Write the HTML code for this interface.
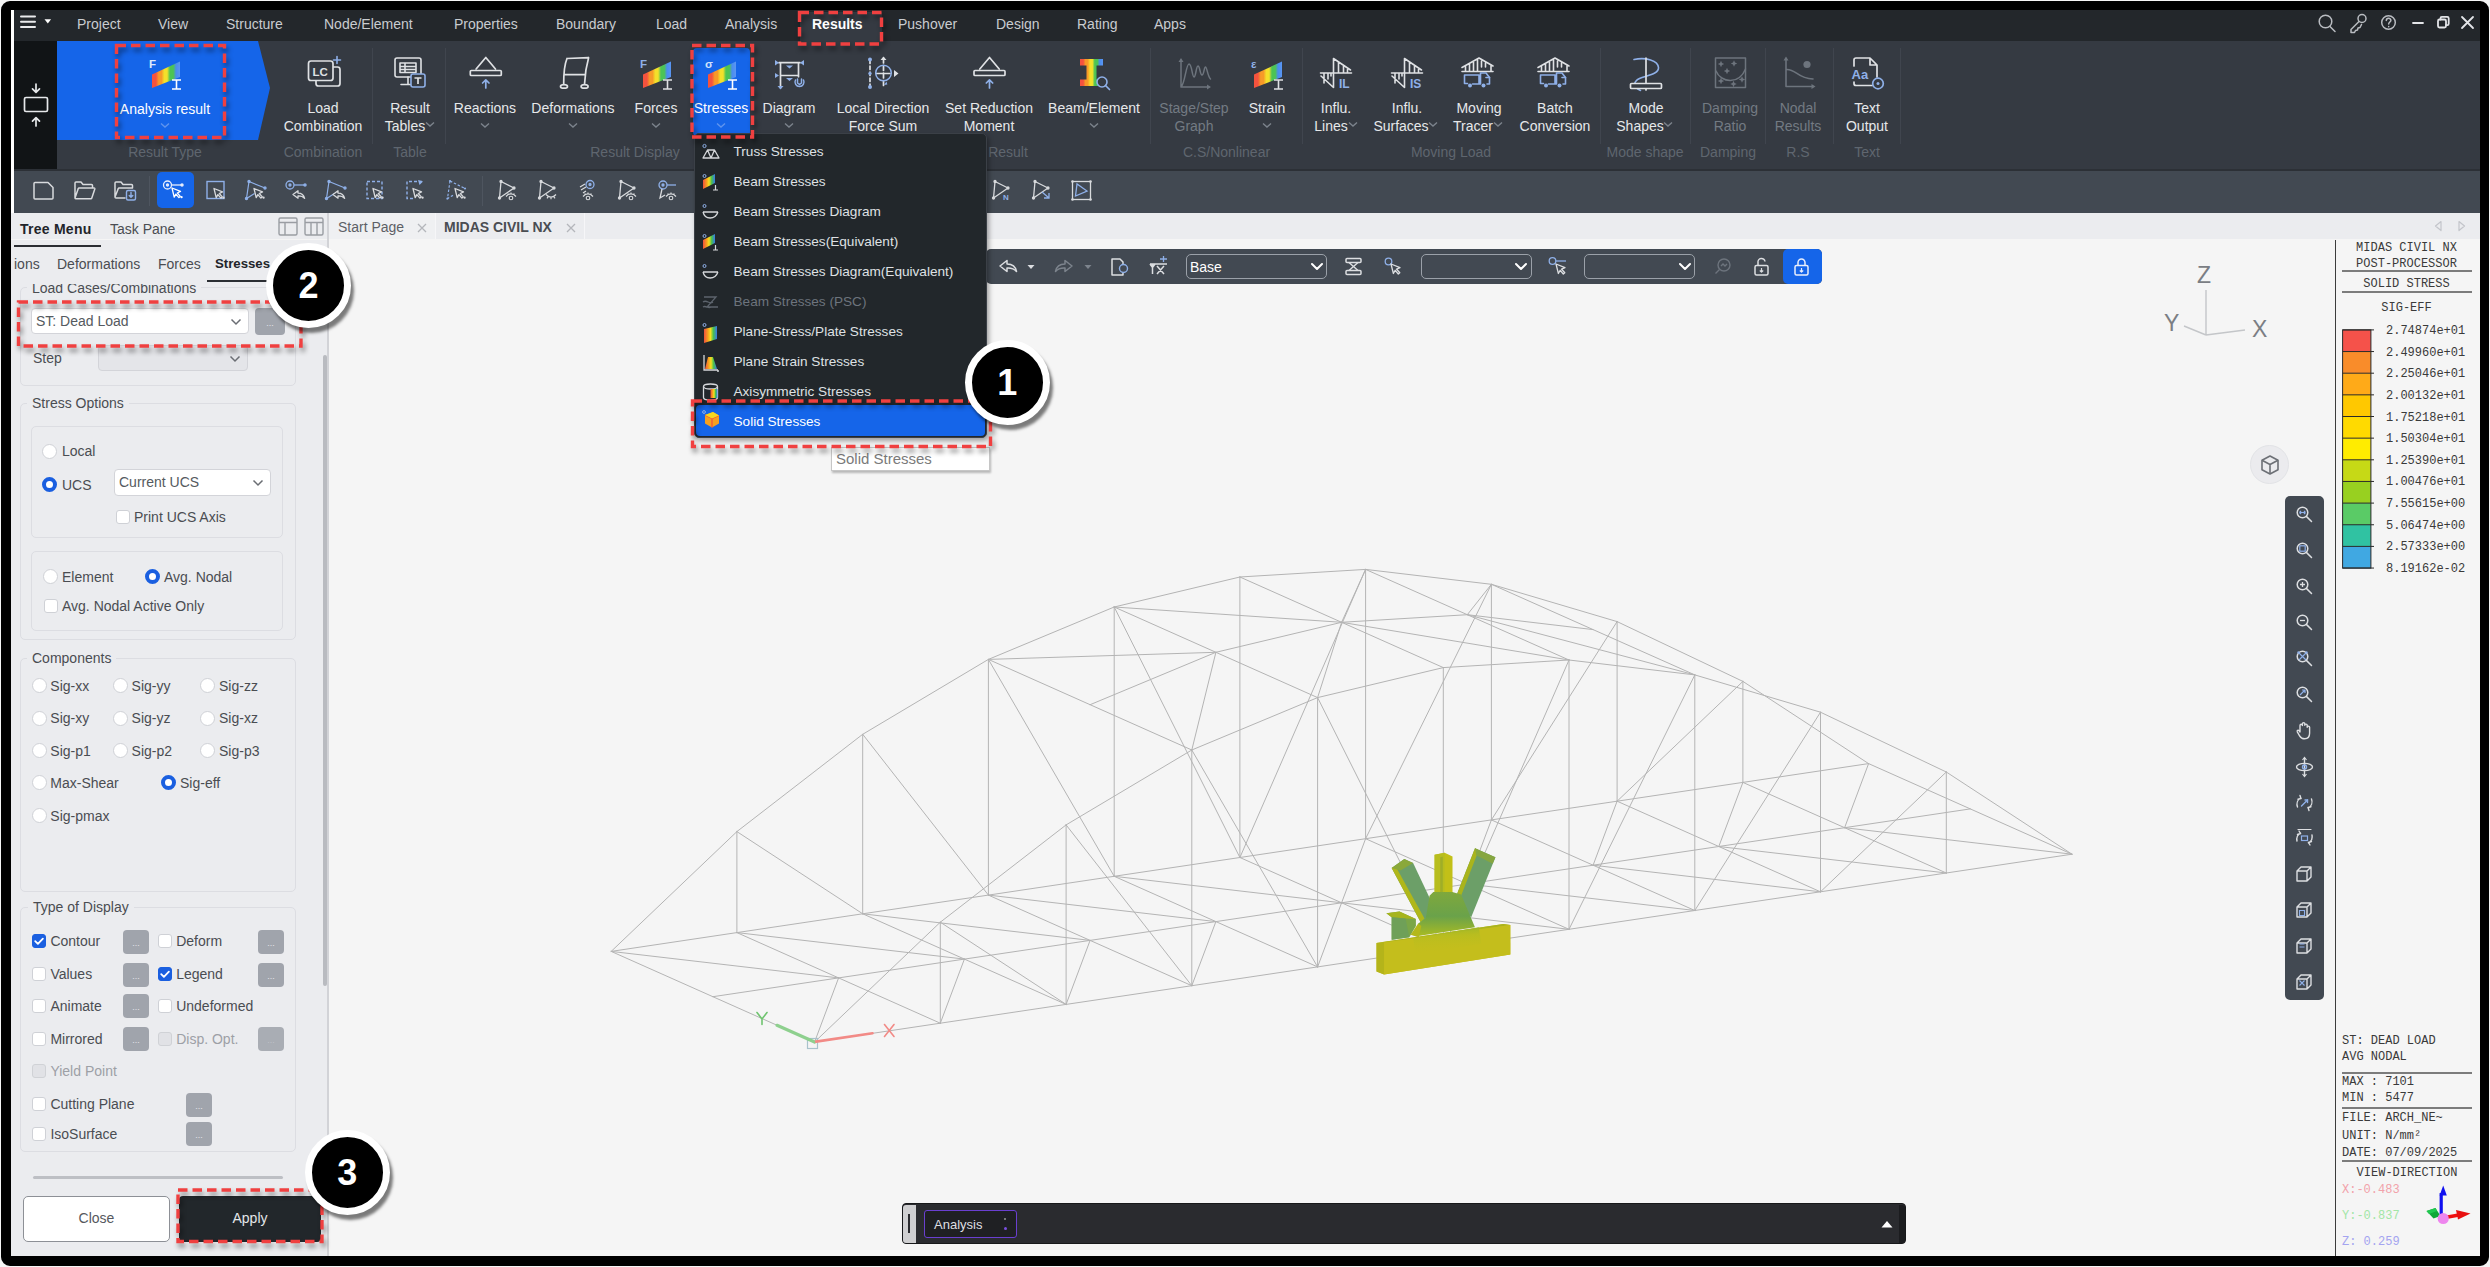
<!DOCTYPE html>
<html><head><meta charset="utf-8"><title>MIDAS CIVIL NX - Solid Stresses</title>
<style>
*{box-sizing:border-box}
html,body{margin:0;padding:0}
body{width:2490px;height:1267px;position:relative;overflow:hidden;background:#fff;font-family:"Liberation Sans",sans-serif;font-size:14px;color:#333}
.abs{position:absolute}
#app{position:absolute;left:0;top:0;width:2490px;height:1267px;overflow:hidden;background:#f5f5f5}
#frame{position:absolute;left:1px;top:1px;width:2488px;height:1265px;border-style:solid;border-color:#000;border-width:9px 9px 10px 10px;border-radius:9px;z-index:100;pointer-events:none}
#frameo{position:absolute;left:0;top:0;width:2490px;height:1267px;border:1px solid #fff;z-index:101;pointer-events:none}
.t{position:absolute;white-space:nowrap;line-height:1}
.mb{position:absolute;top:16px;font-size:14px;color:#c9ccd0;white-space:nowrap;line-height:16px}
.rl{position:absolute;font-size:14px;color:#e6e8ea;white-space:nowrap;line-height:18px;text-align:center;transform:translateX(-50%)}
.rl.dis{color:#737a83}
.gl{position:absolute;top:144px;font-size:14px;color:#5f666f;white-space:nowrap;line-height:16px;text-align:center;transform:translateX(-50%)}
.sep{position:absolute;top:48px;width:1px;height:96px;background:#40454e}
.chev{position:absolute;width:9px;height:5px}
.pl{position:absolute;font-size:14px;color:#4a4d52;white-space:nowrap;line-height:16px}
.radio{position:absolute;width:15px;height:15px;border-radius:50%;background:#fff;border:1px solid #cfd1d6}
.radio.on{border:4.5px solid #1a5fe0;background:#fff}
.cb{position:absolute;width:14px;height:14px;border-radius:3px;background:#fff;border:1px solid #cfd1d6}
.cb.on{background:#1a5fe0;border-color:#1a5fe0}
.cb.dis{background:#e1e2e6;border-color:#d0d2d6}
.dots{position:absolute;width:26px;height:24px;border-radius:4px;background:#a0a4ac;color:#e4e6ea;font-size:9px;text-align:center;line-height:26px;letter-spacing:0}
.grp{position:absolute;border:1px solid #dcdde2;border-radius:5px}
.grpl{position:absolute;background:#ebecef;padding:0 5px;font-size:14px;color:#4a4d52;line-height:16px;white-space:nowrap}
.mi{position:absolute;left:733.5px;font-size:13.6px;color:#dfe1e4;white-space:nowrap;line-height:16px}
.mono{font-family:"Liberation Mono",monospace;font-size:12px;color:#3a3a3a;white-space:nowrap;position:absolute;line-height:12px}
.hl{position:absolute;border:0;pointer-events:none}
.callout{position:absolute;width:85px;height:85px;border-radius:50%;background:#000;border:7px solid #fff;box-shadow:3px 5px 3px rgba(0,0,0,.5);color:#fff;font-weight:bold;font-size:36px;text-align:center;line-height:71px;z-index:50}
</style></head>
<body>
<div id="app">
<!-- ===== menu bar ===== -->
<div class="abs" style="left:11px;top:10px;width:2469px;height:31px;background:#23272b"></div>
<div class="abs" style="left:11px;top:10px;width:3px;height:203px;background:#fff"></div>
<svg class="abs" style="left:18px;top:13px" width="40" height="18" viewBox="0 0 40 18"><g stroke="#e9eaec" stroke-width="2" stroke-linecap="round"><path d="M3 3.5H17M3 8.7H17M3 14H17"/></g><path d="M26.5 6.2h6.6l-3.3 4.4z" fill="#fff"/></svg>
<span class="mb" style="left:77px">Project</span>
<span class="mb" style="left:158px">View</span>
<span class="mb" style="left:226px">Structure</span>
<span class="mb" style="left:324px">Node/Element</span>
<span class="mb" style="left:454px">Properties</span>
<span class="mb" style="left:556px">Boundary</span>
<span class="mb" style="left:656px">Load</span>
<span class="mb" style="left:725px">Analysis</span>
<div class="abs" style="left:800px;top:12px;width:82px;height:31px;background:#353a42"></div>
<span class="mb" style="left:812px;color:#fff;font-weight:bold">Results</span>
<span class="mb" style="left:898px">Pushover</span>
<span class="mb" style="left:996px">Design</span>
<span class="mb" style="left:1077px">Rating</span>
<span class="mb" style="left:1154px">Apps</span>
<!-- window buttons -->
<svg class="abs" style="left:2310px;top:10px" width="170" height="30" viewBox="0 0 170 30"><g fill="none" stroke="#b9bcc1" stroke-width="1.5" stroke-linecap="round" stroke-linejoin="round">
<circle cx="15.5" cy="11.5" r="6.3"/><path d="M20 16.5l5 5"/>
<circle cx="52" cy="8.5" r="4"/><path d="M49 11.5l-8 8v3h3.5l1-2 2-.5.5-2 2-.5 1.5-3"/>
<circle cx="78.5" cy="12.5" r="6.8"/><path d="M76.3 10.6c0-3 4.6-3 4.6-.3 0 1.7-2.2 1.8-2.2 3.8M78.7 16.6v.2"/>
</g><g fill="none" stroke="#e3e5e8" stroke-width="1.8" stroke-linecap="round" stroke-linejoin="round"><path d="M103 13H113"/><rect x="128" y="9.5" width="8" height="8" rx="1.5"/><path d="M130.5 9.5v-1.2c0-.8.6-1.4 1.4-1.4h5.4c.8 0 1.4.6 1.4 1.4v5.4c0 .8-.6 1.4-1.4 1.4H136"/><path d="M152 7l11 11M163 7l-11 11"/></g></svg>
<!-- ===== ribbon ===== -->
<div class="abs" style="left:14px;top:41px;width:2466px;height:128px;background:#353a42"></div>
<div class="abs" style="left:14px;top:41px;width:43px;height:128px;background:#111416"></div>
<svg class="abs" style="left:20px;top:80px" width="32" height="50" viewBox="0 0 32 50"><g fill="none" stroke="#e6e8ea" stroke-width="1.7" stroke-linecap="round" stroke-linejoin="round"><rect x="4.5" y="17.5" width="23" height="14" rx="1.5"/><path d="M16 4v8M12.5 8.8L16 12.3l3.5-3.5M16 46v-8M12.5 41.2L16 37.7l3.5 3.5"/></g></svg>
<svg class="abs" style="left:57px;top:41px" width="215" height="99" viewBox="0 0 215 99"><path d="M0 0H201L213 47L201 99H0z" fill="#1565e9"/></svg>
<!-- group separators -->
<div class="sep" style="left:372px"></div><div class="sep" style="left:445px"></div><div class="sep" style="left:1150px"></div><div class="sep" style="left:1302px"></div><div class="sep" style="left:1600px"></div><div class="sep" style="left:1690px"></div><div class="sep" style="left:1765px"></div><div class="sep" style="left:1833px"></div><div class="sep" style="left:1900px"></div>
<!-- stresses active bg -->
<div class="abs" style="left:693px;top:48px;width:57px;height:88px;background:#1565e9;border-radius:4px"></div>
<!-- labels -->
<span class="rl" style="left:165px;top:99.5px;color:#fff">Analysis result</span>
<span class="rl" style="left:323px;top:99px">Load<br>Combination</span>
<span class="rl" style="left:410px;top:99px">Result</span><span class="rl" style="left:405px;top:117px">Tables</span>
<span class="rl" style="left:485px;top:99px">Reactions</span>
<span class="rl" style="left:573px;top:99px">Deformations</span>
<span class="rl" style="left:656px;top:99px">Forces</span>
<span class="rl" style="left:721px;top:99px;color:#fff">Stresses</span>
<span class="rl" style="left:789px;top:99px">Diagram</span>
<span class="rl" style="left:883px;top:99px">Local Direction<br>Force Sum</span>
<span class="rl" style="left:989px;top:99px">Set Reduction<br>Moment</span>
<span class="rl" style="left:1094px;top:99px">Beam/Element</span>
<span class="rl dis" style="left:1194px;top:99px">Stage/Step<br>Graph</span>
<span class="rl" style="left:1267px;top:99px">Strain</span>
<span class="rl" style="left:1336px;top:99px">Influ.</span><span class="rl" style="left:1331px;top:117px">Lines</span>
<span class="rl" style="left:1407px;top:99px">Influ.</span><span class="rl" style="left:1401px;top:117px">Surfaces</span>
<span class="rl" style="left:1479px;top:99px">Moving</span><span class="rl" style="left:1473px;top:117px">Tracer</span>
<span class="rl" style="left:1555px;top:99px">Batch<br>Conversion</span>
<span class="rl" style="left:1646px;top:99px">Mode</span><span class="rl" style="left:1640px;top:117px">Shapes</span>
<span class="rl dis" style="left:1730px;top:99px">Damping<br>Ratio</span>
<span class="rl dis" style="left:1798px;top:99px">Nodal<br>Results</span>
<span class="rl" style="left:1867px;top:99px">Text<br>Output</span>
<!-- group labels -->
<span class="gl" style="left:165px">Result Type</span>
<span class="gl" style="left:323px">Combination</span>
<span class="gl" style="left:410px">Table</span>
<span class="gl" style="left:635px">Result Display</span>
<span class="gl" style="left:1008px">Result</span>
<span class="gl" style="left:1226.5px">C.S/Nonlinear</span>
<span class="gl" style="left:1451px">Moving Load</span>
<span class="gl" style="left:1645px">Mode shape</span>
<span class="gl" style="left:1728px">Damping</span>
<span class="gl" style="left:1798px">R.S</span>
<span class="gl" style="left:1867px">Text</span>
<!-- ===== ribbon icons ===== -->
<svg class="abs" style="left:0;top:0" width="2490" height="170" viewBox="0 0 2490 170">
<defs><linearGradient id="rbw" x1="0" y1="0" x2="1" y2="0"><stop offset="0" stop-color="#f4523e"/><stop offset=".2" stop-color="#f4523e"/><stop offset=".2" stop-color="#f79a28"/><stop offset=".4" stop-color="#f79a28"/><stop offset=".4" stop-color="#f4e02a"/><stop offset=".6" stop-color="#f4e02a"/><stop offset=".6" stop-color="#4cc455"/><stop offset=".8" stop-color="#4cc455"/><stop offset=".8" stop-color="#4a8cf0"/><stop offset="1" stop-color="#4a8cf0"/></linearGradient>
<linearGradient id="rbs" x1="0" y1="0" x2="1" y2="0"><stop offset="0" stop-color="#f4523e"/><stop offset=".14" stop-color="#f4523e"/><stop offset=".24" stop-color="#f79a28"/><stop offset=".34" stop-color="#f79a28"/><stop offset=".44" stop-color="#f4e02a"/><stop offset=".54" stop-color="#f4e02a"/><stop offset=".64" stop-color="#4cc455"/><stop offset=".76" stop-color="#4cc455"/><stop offset=".86" stop-color="#4a8cf0"/><stop offset="1" stop-color="#5a96f2"/></linearGradient></defs>
<path d="M152.0 74.500L180.0 61.500V77L152.0 88z" fill="url(#rbs)"/>
<text x="149.0" y="68" font-family="Liberation Sans,sans-serif" font-size="11.500" font-weight="bold" fill="#dfe9fb">F</text>
<path d="M172.0 80h9M172.0 89h9M176.5 80v9" stroke="#fff" stroke-width="1.600" fill="none"/>
<path d="M643.0 74.500L671.0 61.500V77L643.0 88z" fill="url(#rbs)"/>
<text x="640.0" y="68" font-family="Liberation Sans,sans-serif" font-size="11.500" font-weight="bold" fill="#8fb0e8">F</text>
<path d="M663.0 80h9M663.0 89h9M667.5 80v9" stroke="#dfe1e4" stroke-width="1.600" fill="none"/>
<path d="M708.0 74.500L736.0 61.500V77L708.0 88z" fill="url(#rbs)"/>
<text x="705.0" y="68" font-family="Liberation Sans,sans-serif" font-size="11.500" font-weight="bold" fill="#cfe0fb">&#963;</text>
<path d="M728.0 80h9M728.0 89h9M732.5 80v9" stroke="#fff" stroke-width="1.600" fill="none"/>
<path d="M1254.0 74.500L1282.0 61.500V77L1254.0 88z" fill="url(#rbs)"/>
<text x="1251.0" y="68" font-family="Liberation Sans,sans-serif" font-size="11.500" font-weight="bold" fill="#8fb0e8">&#949;</text>
<path d="M1274.0 80h9M1274.0 89h9M1278.5 80v9" stroke="#dfe1e4" stroke-width="1.600" fill="none"/>
<g fill="none" stroke="#dfe1e4" stroke-width="1.7" stroke-linecap="round" stroke-linejoin="round" ><rect x="316" y="67" width="24" height="19" rx="2.500"/></g>
<rect x="308.500" y="61" width="24.500" height="19.500" rx="2.500" fill="#353a42" stroke="#dfe1e4" stroke-width="1.700"/>
<text x="312.500" y="75.500" font-family="Liberation Sans,sans-serif" font-size="11.500" font-weight="bold" fill="#dfe1e4">LC</text>
<g fill="none" stroke="#8fb0e8" stroke-width="1.6" stroke-linecap="round" stroke-linejoin="round" ><path d="M337 56.500v7M333.500 60h7"/></g>
<g fill="none" stroke="#dfe1e4" stroke-width="1.6" stroke-linecap="round" stroke-linejoin="round" ><rect x="395" y="58" width="26" height="19" rx="2"/><path d="M408 77v7M401 84.500h12"/><path d="M400 63h16v9.500h-16zM400 66.500h16M400 69.500h16M405 63v9.500"/></g>
<rect x="411" y="74" width="14" height="13" rx="2" fill="#353a42" stroke="#8fb0e8" stroke-width="1.600"/>
<path d="M414.500 78h7M418 78v6" stroke="#dfe1e4" stroke-width="1.700" fill="none"/>
<g fill="none" stroke="#dfe1e4" stroke-width="1.7" stroke-linecap="round" stroke-linejoin="round" ><path d="M476.1 69L485.8 57.500L495.5 69"/><rect x="470.3" y="70.500" width="31" height="5" rx="1"/></g>
<g fill="none" stroke="#8fb0e8" stroke-width="1.7" stroke-linecap="round" stroke-linejoin="round" ><path d="M485.8 88v-8M482.6 83l3.200-3.200 3.200 3.200"/></g>
<g fill="none" stroke="#dfe1e4" stroke-width="1.7" stroke-linecap="round" stroke-linejoin="round" ><path d="M979.8 69L989.5 57.500L999.2 69"/><rect x="974.0" y="70.500" width="31" height="5" rx="1"/></g>
<g fill="none" stroke="#8fb0e8" stroke-width="1.7" stroke-linecap="round" stroke-linejoin="round" ><path d="M989.5 88v-8M986.3 83l3.200-3.200 3.200 3.200"/></g>
<g fill="none" stroke="#dfe1e4" stroke-width="1.7" stroke-linecap="round" stroke-linejoin="round" ><path d="M567 58.500l21.600-.8M567 58.500c-2.500 6-3.300 14-3.300 25M588.600 57.700c-2 7-3.600 15-4 25.800M564.500 74.700h21"/><ellipse cx="564" cy="86.400" rx="3.500" ry="1.800"/><ellipse cx="584.600" cy="86.400" rx="3.500" ry="1.800"/></g>
<g fill="none" stroke="#dfe1e4" stroke-width="1.7" stroke-linecap="round" stroke-linejoin="round" ><path d="M779 62.700h21M780.500 62.700v25M798.500 62.700v14M780.500 75.500h18"/></g>
<path d="M775 60l4 2.700-4 2.700zM804 60l-4 2.700 4 2.700zM786 65.500l3.500 3 3.500-3zM775 73l4 2.500-4 2.500zM786 78l3.500 3 3.500-3zM777.500 86l3 3.500 3-3.500z" fill="#8fb0e8"/>
<g fill="none" stroke="#8fb0e8" stroke-width="1.5" stroke-linecap="round" stroke-linejoin="round" ><path d="M795.500 80a4.500 4.500 0 1 0 8 0M797.500 79v4l2 1.500 2-1.500v-4"/></g>
<g fill="none" stroke="#dfe1e4" stroke-width="1.7" stroke-linecap="round" stroke-linejoin="round" ><path d="M870 60v27" stroke-dasharray="3.500 2.500"/><path d="M883.500 58v30" stroke-dasharray="5 2.500"/><path d="M876 73.500h14"/></g>
<g fill="none" stroke="#8fb0e8" stroke-width="1.5" stroke-linecap="round" stroke-linejoin="round" ><circle cx="883.500" cy="73" r="7.800"/></g>
<circle cx="870" cy="59.500" r="2" fill="#8fb0e8"/><circle cx="870" cy="73.500" r="1.700" fill="#8fb0e8"/><circle cx="870" cy="87" r="2" fill="#8fb0e8"/>
<path d="M880.500 60l3-3.500 3 3.500zM894 70l4.500 3.500-4.500 3.500z" fill="#dfe1e4"/><path d="M884 85l2.500-3.500.8 3z" fill="#8fb0e8"/>
<path d="M1080 59h23v6.500h-6.500v14h6.500v6.500h-23v-6.500h6.500v-14h-6.500z" fill="url(#rbs)"/>
<circle cx="1102" cy="82" r="5" fill="#353a42" stroke="#8fb0e8" stroke-width="1.600"/><path d="M1105.500 85.500l4 4" stroke="#8fb0e8" stroke-width="1.700" stroke-linecap="round"/>
<g fill="none" stroke="#6d747d" stroke-width="1.5" stroke-linecap="round" stroke-linejoin="round" ><path d="M1181 60v27h28M1181 87c4-3 5-23 8-23s3 13 5 13 2-11 4-11 2 9 4 9 2-8 3.500-8 2 9 5 12"/></g>
<path d="M1178.500 62l2.500-4 2.500 4zM1207 84.500l4 2.500-4 2.500z" fill="#6d747d"/>
<g fill="none" stroke="#dfe1e4" stroke-width="1.6" stroke-linecap="round" stroke-linejoin="round" ><path d="M1333.5 58.500v29M1320.5 73h31M1333.5 58.500l17 11.500M1333.5 87.500l-12.500-11.500M1338.5 62v11M1343.5 66v7M1347.5 69.500v3.500M1328.0 73v6M1324.0 73v10M1331.0 73v3"/></g>
<text x="1339.0" y="88" font-family="Liberation Sans,sans-serif" font-size="12" font-weight="bold" fill="#8fb0e8">IL</text>
<g fill="none" stroke="#dfe1e4" stroke-width="1.6" stroke-linecap="round" stroke-linejoin="round" ><path d="M1404.5 58.500v29M1391.5 73h31M1404.5 58.500l17 11.500M1404.5 87.500l-12.500-11.500M1409.5 62v11M1414.5 66v7M1418.5 69.500v3.500M1399.0 73v6M1395.0 73v10M1402.0 73v3"/></g>
<text x="1410.0" y="88" font-family="Liberation Sans,sans-serif" font-size="12" font-weight="bold" fill="#8fb0e8">IS</text>
<g fill="none" stroke="#dfe1e4" stroke-width="1.6" stroke-linecap="round" stroke-linejoin="round" ><path d="M1462.0 67.500l17-9.500 14 8M1462.0 71.500h31M1465.5 66v5.500M1469.5 63.500v8M1473.5 61v10.500M1477.5 59v12.500M1481.5 61v6M1485.5 63v4M1491.0 66v5"/></g>
<g fill="none" stroke="#8fb0e8" stroke-width="1.6" stroke-linecap="round" stroke-linejoin="round" ><path d="M1464.5 75h14.500v9M1464.5 75v8.500h3M1472.5 84h7M1487.0 84h2.500v-6.500l-3.500-4.500h-5.500v11"/><path d="M1486.0 77.500h3.500"/></g>
<circle cx="1470.0" cy="85.500" r="2" fill="#8fb0e8"/><circle cx="1483.5" cy="85.500" r="2" fill="#8fb0e8"/>
<g fill="none" stroke="#dfe1e4" stroke-width="1.6" stroke-linecap="round" stroke-linejoin="round" ><path d="M1538.0 67.500l17-9.500 14 8M1538.0 71.500h31M1541.5 66v5.500M1545.5 63.500v8M1549.5 61v10.500M1553.5 59v12.500M1557.5 61v6M1561.5 63v4M1567.0 66v5"/></g>
<g fill="none" stroke="#8fb0e8" stroke-width="1.6" stroke-linecap="round" stroke-linejoin="round" ><path d="M1540.5 75h14.500v9M1540.5 75v8.500h3M1548.5 84h7M1563.0 84h2.500v-6.500l-3.500-4.500h-5.500v11"/><path d="M1562.0 77.500h3.500"/></g>
<circle cx="1546.0" cy="85.500" r="2" fill="#8fb0e8"/><circle cx="1559.5" cy="85.500" r="2" fill="#8fb0e8"/>
<g fill="none" stroke="#8fb0e8" stroke-width="1.6" stroke-linecap="round" stroke-linejoin="round" ><path d="M1634 59.500c12-2.500 24 1 24.500 8s-13 8-19 11-7 8 1 12"/></g>
<g fill="none" stroke="#dfe1e4" stroke-width="1.7" stroke-linecap="round" stroke-linejoin="round" ><path d="M1646 58v32"/><rect x="1630.500" y="83.500" width="31" height="5" rx="1" fill="#353a42"/></g>
<g fill="none" stroke="#6d747d" stroke-width="1.5" stroke-linecap="round" stroke-linejoin="round" ><rect x="1715.500" y="58" width="30" height="29.500"/><path d="M1716 71c5 12 23 14 29.500-2"/></g>
<path d="M1721.0 60.8l1 2.200 2.200 1-2.200 1-1 2.200-1-2.200-2.200-1 2.200-1z" fill="#6d747d"/>
<path d="M1734.0 60.3l1 2.200 2.200 1-2.200 1-1 2.200-1-2.200-2.200-1 2.200-1z" fill="#6d747d"/>
<path d="M1727.0 67.8l1 2.200 2.200 1-2.200 1-1 2.200-1-2.200-2.200-1 2.200-1z" fill="#6d747d"/>
<path d="M1721.0 77.8l1 2.200 2.200 1-2.200 1-1 2.200-1-2.200-2.200-1 2.200-1z" fill="#6d747d"/>
<path d="M1733.5 80.8l1 2.200 2.200 1-2.200 1-1 2.200-1-2.200-2.200-1 2.200-1z" fill="#6d747d"/>
<path d="M1742.0 76.3l1 2.200 2.200 1-2.200 1-1 2.200-1-2.200-2.200-1 2.200-1z" fill="#6d747d"/>
<g fill="none" stroke="#6d747d" stroke-width="1.6" stroke-linecap="round" stroke-linejoin="round" ><path d="M1786 58.500v28h27M1786 69.500c10-1 11 9 27 9.500"/></g>
<path d="M1783.500 60.500l2.500-4 2.500 4zM1811.500 84l4 2.500-4 2.500z" fill="#6d747d"/><circle cx="1807" cy="64.500" r="3.600" fill="#6d747d"/>
<g fill="none" stroke="#dfe1e4" stroke-width="1.7" stroke-linecap="round" stroke-linejoin="round" ><path d="M1872 85.500h-16a2 2 0 0 1-2-2V82M1854 66v-6a2 2 0 0 1 2-2h14l7 7v12M1870 58v7h7"/></g>
<text x="1851.500" y="78.500" font-family="Liberation Sans,sans-serif" font-size="13" font-weight="bold" fill="#8fb0e8">Aa</text>
<circle cx="1878" cy="83.500" r="5.300" fill="#353a42" stroke="#8fb0e8" stroke-width="1.700"/><circle cx="1878" cy="83.500" r="1.500" fill="#8fb0e8"/>
<path d="M161.0 123.5l4 3.500 4-3.500" fill="none" stroke="#5f94ee" stroke-width="1.400"/>
<path d="M426.0 122.5l4 3.500 4-3.500" fill="none" stroke="#7c838c" stroke-width="1.400"/>
<path d="M481.0 123.5l4 3.500 4-3.500" fill="none" stroke="#7c838c" stroke-width="1.400"/>
<path d="M569.0 123.5l4 3.500 4-3.500" fill="none" stroke="#7c838c" stroke-width="1.400"/>
<path d="M652.0 123.5l4 3.500 4-3.500" fill="none" stroke="#7c838c" stroke-width="1.400"/>
<path d="M785.0 123.5l4 3.500 4-3.500" fill="none" stroke="#7c838c" stroke-width="1.400"/>
<path d="M1090.0 123.5l4 3.500 4-3.500" fill="none" stroke="#7c838c" stroke-width="1.400"/>
<path d="M1263.0 123.5l4 3.500 4-3.500" fill="none" stroke="#7c838c" stroke-width="1.400"/>
<path d="M717.0 123.5l4 3.500 4-3.500" fill="none" stroke="#5f94ee" stroke-width="1.400"/>
<path d="M1349.0 122.5l4 3.500 4-3.500" fill="none" stroke="#7c838c" stroke-width="1.400"/>
<path d="M1429.0 122.5l4 3.500 4-3.500" fill="none" stroke="#7c838c" stroke-width="1.400"/>
<path d="M1494.0 122.5l4 3.500 4-3.500" fill="none" stroke="#7c838c" stroke-width="1.400"/>
<path d="M1664.0 122.5l4 3.500 4-3.500" fill="none" stroke="#7c838c" stroke-width="1.400"/>
</svg>
<!-- ===== quick toolbar ===== -->
<div class="abs" style="left:14px;top:169px;width:2466px;height:44px;background:#424952"></div>
<div class="abs" style="left:14px;top:169px;width:2466px;height:2px;background:#2c3036"></div>
<div class="abs" style="left:157px;top:172px;width:37px;height:36px;background:#1565e9;border-radius:5px"></div>
<div class="abs" style="left:149px;top:176px;width:1px;height:30px;background:#4e555f"></div>
<div class="abs" style="left:482px;top:176px;width:1px;height:30px;background:#4e555f"></div>
<svg width="0" height="0" style="position:absolute"><defs>
<g id="cur"><path d="M0 0l8.5 3.4-3.2 1.6 3 3.4-1.4 1.2-3-3.5-1.7 3z" fill="#424952" stroke="#d8dadd" stroke-width="1.3" stroke-linejoin="round"/><circle cx="9.6" cy="9.2" r="1.1" fill="#d8dadd"/></g>
<g id="curb"><path d="M0 0l8.5 3.4-3.2 1.6 3 3.4-1.4 1.2-3-3.5-1.7 3z" fill="#1565e9" stroke="#fff" stroke-width="1.3" stroke-linejoin="round"/><circle cx="9.6" cy="9.2" r="1.1" fill="#fff"/></g>
<g id="uns"><path d="M1 7.5L6 3.8v2.3c3.5 0 5.8 1.6 6.6 5.2-1.7-2-3.5-2.6-6.6-2.5v2.4z" fill="#424952" stroke="#d8dadd" stroke-width="1.3" stroke-linejoin="round"/></g>
<g id="tri" fill="none" stroke="#d8dadd" stroke-width="1.3" stroke-linejoin="round"><path d="M3 2.5L1.5 19 16 9z"/><circle cx="3" cy="2.5" r="1" fill="#d8dadd"/><circle cx="1.5" cy="19" r="1" fill="#d8dadd"/><circle cx="16" cy="9" r="1" fill="#d8dadd"/></g>
</defs></svg>
<svg class="abs" style="left:14px;top:169px" width="1100" height="44" viewBox="0 0 1100 44">
<g fill="none" stroke="#d8dadd" stroke-width="1.5" stroke-linejoin="round" stroke-linecap="round">
<!-- new file (43.5-14=29.5) -->
<path d="M21 13.5h13l5 5V29a1 1 0 0 1-1 1H21a1 1 0 0 1-1-1V14.5a1 1 0 0 1 1-1z"/>
<!-- folder open (69.7) -->
<path d="M61 29V14a1 1 0 0 1 1-1h5l2 2.5h8.5a1 1 0 0 1 1 1V19M61 29l3.2-9.2a1 1 0 0 1 1-.8H80a.8.8 0 0 1 .8 1L77.8 29a1 1 0 0 1-1 .8H62a1 1 0 0 1-1-.8z"/>
<!-- folder download (110) -->
<path d="M101 28V14a1 1 0 0 1 1-1h5l2 2.5h8.5a1 1 0 0 1 1 1V19M101 28l3.2-8.2a1 1 0 0 1 1-.8H118M101 28a1 1 0 0 0 1 1h9"/>
</g>
<g fill="none" stroke="#8fb0e8" stroke-width="1.4" stroke-linejoin="round" stroke-linecap="round"><rect x="112.5" y="21.5" width="9" height="9.5" rx="1.5"/><path d="M117 23.5v4.5M115.2 26.5l1.8 1.8 1.8-1.8"/></g>
<!-- select single (161.6) active -->
<g fill="none" stroke="#e8eefc" stroke-width="1.3"><circle cx="153.5" cy="16" r="4"/><circle cx="153.5" cy="16" r="1" fill="#e8eefc"/><path d="M157.5 16H168"/><circle cx="168" cy="16" r="1.1" fill="#e8eefc"/></g>
<use href="#curb" x="158" y="19"/>
<!-- select window (201.6) -->
<rect x="193" y="12.5" width="17" height="17" fill="none" stroke="#8fb0e8" stroke-width="1.4"/>
<use href="#cur" x="200" y="19.5"/>
<!-- polygon select (241.8) -->
<g fill="none" stroke="#8fb0e8" stroke-width="1.2"><path d="M235 12.5l-2.5 17 8-5M235 12.5l16 6.5"/><circle cx="235" cy="12.5" r="1.1" fill="#8fb0e8"/><circle cx="232.500" cy="29.500" r="1.1" fill="#8fb0e8"/><circle cx="251" cy="19" r="1.1" fill="#8fb0e8"/></g>
<use href="#cur" x="240" y="19.500"/>
<!-- unselect single (282) -->
<g fill="none" stroke="#8fb0e8" stroke-width="1.3"><circle cx="276" cy="16" r="4"/><circle cx="276" cy="16" r="1" fill="#8fb0e8"/><path d="M280 16H291"/><circle cx="291" cy="16" r="1.1" fill="#8fb0e8"/></g>
<use href="#uns" x="278" y="18"/>
<!-- unselect polygon (322) -->
<g fill="none" stroke="#8fb0e8" stroke-width="1.2"><path d="M315 12.5l-2.500 17 8-5M315 12.5l16 6.500"/><circle cx="315" cy="12.5" r="1.1" fill="#8fb0e8"/><circle cx="312.5" cy="29.500" r="1.1" fill="#8fb0e8"/><circle cx="331" cy="19" r="1.1" fill="#8fb0e8"/></g>
<use href="#uns" x="318" y="18"/>
<!-- dashed window 1 (362.7) -->
<rect x="353" y="12.5" width="15" height="17" fill="none" stroke="#8fb0e8" stroke-width="1.4" stroke-dasharray="3 2"/>
<use href="#cur" x="359" y="19.5"/>
<!-- dashed window 2 (402.6) -->
<path d="M408 12.5H393v17h6" fill="none" stroke="#8fb0e8" stroke-width="1.4" stroke-dasharray="3 2"/>
<path d="M404 11l5 1.500-3.500 3.500z" fill="#8fb0e8"/>
<use href="#cur" x="399" y="19.5"/>
<!-- dashed polygon (442.8) -->
<g fill="none" stroke="#8fb0e8" stroke-width="1.2" stroke-dasharray="2.5 1.8"><path d="M436 12l-2.500 17.500 7-4M436 12l15 7.500"/></g>
<circle cx="436" cy="12" r="1.1" fill="#8fb0e8"/><circle cx="433.500" cy="29.500" r="1.1" fill="#8fb0e8"/><circle cx="451" cy="19.5" r="1.1" fill="#8fb0e8"/>
<use href="#cur" x="441" y="19.500"/>
<!-- view group 493.4 533.6 573.5 613.7 654.5 -->
<g transform="translate(484,10)"><use href="#tri"/><path d="M8 17.500c3-3.500 7-3.500 10 0M10.500 16l-.8-1.500M13 15.300V13.600M15.500 16l.8-1.500" fill="none" stroke="#d8dadd" stroke-width="1.2"/><circle cx="13" cy="19" r="1.800" fill="none" stroke="#d8dadd" stroke-width="1.1"/></g>
<g transform="translate(524,10)"><use href="#tri"/><path d="M8 15.500c3 3.500 7 3.500 10 0M10 17.800l-1 1.500M13 18.500v1.800M16 17.800l1 1.500" fill="none" stroke="#d8dadd" stroke-width="1.200"/></g>
<g transform="translate(564,10)"><g fill="none" stroke="#8fb0e8" stroke-width="1.3"><circle cx="12" cy="5.500" r="4"/><circle cx="12" cy="5.500" r="1" fill="#8fb0e8"/></g><path d="M2 8l5-3M3 11l5-3M5 14l3-2" stroke="#d8dadd" stroke-width="1.300"/><path d="M5 17.500c3-3.500 7-3.500 10 0M7.500 16l-.8-1.500M10 15.300V13.600M12.500 16l.8-1.500" fill="none" stroke="#d8dadd" stroke-width="1.200"/><circle cx="10" cy="19" r="1.800" fill="none" stroke="#d8dadd" stroke-width="1.100"/></g>
<g transform="translate(604,10)"><use href="#tri"/><path d="M8 17.500c3-3.500 7-3.500 10 0M10.500 16l-.8-1.500M13 15.300V13.600M15.500 16l.8-1.500" fill="none" stroke="#d8dadd" stroke-width="1.200"/><circle cx="13" cy="19" r="1.800" fill="none" stroke="#d8dadd" stroke-width="1.100"/></g>
<g transform="translate(644,10)"><g fill="none" stroke="#8fb0e8" stroke-width="1.300"><circle cx="5" cy="6" r="4"/><circle cx="5" cy="6" r="1" fill="#8fb0e8"/><path d="M9 6h9"/></g><path d="M4 10l-2 9 5-3" fill="none" stroke="#d8dadd" stroke-width="1.300"/><path d="M8 17.500c3-3.500 7-3.500 10 0M10.500 16l-.8-1.500M13 15.300V13.600M15.500 16l.8-1.500" fill="none" stroke="#d8dadd" stroke-width="1.200"/><circle cx="13" cy="19" r="1.800" fill="none" stroke="#d8dadd" stroke-width="1.100"/></g>
<!-- right trio 1001 1041 1081 -->
<g transform="translate(978,10)"><use href="#tri"/><text x="11" y="21" font-family="Liberation Sans" font-size="8" font-weight="bold" fill="#8fb0e8">N</text></g>
<g transform="translate(1018,10)"><use href="#tri"/><path d="M10 13l7 6M17 14v5h-5" fill="none" stroke="#8fb0e8" stroke-width="1.3"/></g>
<g transform="translate(1057,10)" fill="none" stroke="#d8dadd" stroke-width="1.300"><rect x="1.500" y="2.500" width="18" height="18"/><path d="M6 5l-1.500 12L16 12z" stroke="#8fb0e8"/><g fill="#d8dadd" stroke="none"><circle cx="1.500" cy="2.500" r="1.300"/><circle cx="19.500" cy="2.500" r="1.300"/><circle cx="1.500" cy="20.500" r="1.300"/><circle cx="19.500" cy="20.500" r="1.300"/></g></g>
</svg>
<!-- ===== tab row ===== -->
<div class="abs" style="left:11px;top:213px;width:2469px;height:26px;background:#ebecef"></div>
<div class="abs" style="left:329px;top:213px;width:106px;height:26px;background:#eff0f2"></div>
<div class="abs" style="left:435px;top:213px;width:1px;height:26px;background:#f6f6f8"></div>
<div class="abs" style="left:584px;top:213px;width:1px;height:26px;background:#f6f6f8"></div>
<span class="t" style="left:20px;top:222px;font-size:14px;font-weight:bold;color:#22252a;letter-spacing:.25px">Tree Menu</span>
<span class="t" style="left:110px;top:222px;font-size:14px;color:#4a4d52">Task Pane</span>
<svg class="abs" style="left:277px;top:216px" width="50" height="22" viewBox="0 0 50 22"><g fill="none" stroke="#9a9da3" stroke-width="1.4"><rect x="2" y="2" width="18" height="17" rx="1.500"/><path d="M2 6.500h18M8 6.500V19"/><rect x="28" y="2" width="18" height="17" rx="1.500"/><path d="M28 6.500h18M34 6.500V19M40 6.500V19"/></g></svg>
<span class="t" style="left:338px;top:220px;font-size:14px;color:#5d6066">Start Page</span>
<svg class="abs" style="left:416px;top:222px" width="12" height="12" viewBox="0 0 12 12"><path d="M2 2l8 8M10 2l-8 8" stroke="#b4b6bb" stroke-width="1.3"/></svg>
<span class="t" style="left:444px;top:220px;font-size:14px;font-weight:bold;color:#4a4d52">MIDAS CIVIL NX</span>
<svg class="abs" style="left:565px;top:222px" width="12" height="12" viewBox="0 0 12 12"><path d="M2 2l8 8M10 2l-8 8" stroke="#b4b6bb" stroke-width="1.3"/></svg>
<svg class="abs" style="left:2430px;top:219px" width="44" height="14" viewBox="0 0 44 14"><path d="M11 2.500L5.500 7 11 11.500zM29 2.500L34.500 7 29 11.500z" fill="none" stroke="#c3c5ca" stroke-width="1.2" stroke-linejoin="round"/></svg>
<!-- ===== left panel ===== -->
<div class="abs" style="left:11px;top:240px;width:316px;height:1016px;background:#ebecef"></div>
<div class="abs" style="left:327px;top:213px;width:2px;height:1043px;background:#d2d3d7"></div>
<div class="abs" style="left:323px;top:355px;width:4px;height:631px;background:#b9bbc0;border-radius:2px"></div>
<div class="abs" style="left:14px;top:245px;width:87px;height:2px;background:#2b2e33"></div>
<span class="pl" style="left:14px;top:256px;">ions</span>
<span class="pl" style="left:57px;top:256px;">Deformations</span>
<span class="pl" style="left:158px;top:256px;">Forces</span>
<span class="pl" style="left:215px;top:256px;font-weight:bold;color:#22252a;font-size:13.2px">Stresses</span>
<div class="abs" style="left:207px;top:280px;width:61px;height:2px;background:#2b2e33"></div>
<div class="abs" style="left:14px;top:284px;width:312px;height:110px;overflow:hidden">
<div class="grp" style="left:6px;top:3px;width:276px;height:99px"></div>
<span class="grpl" style="left:13px;top:-4.5px">Load Cases/Combinations</span>
</div>
<div class="abs" style="left:31px;top:308px;width:218px;height:26px;background:#fff;border:1px solid #d3d4d9;border-radius:4px"></div>
<span class="pl" style="left:36px;top:313px;color:#555a60">ST: Dead Load</span>
<svg class="abs" style="left:230px;top:318px" width="12" height="8" viewBox="0 0 12 8"><path d="M1.500 1.500L6 6l4.500-4.500" fill="none" stroke="#6a6d73" stroke-width="1.5"/></svg>
<div class="dots" style="left:255px;top:307.6px;width:30px;height:27px;line-height:30px">...</div>
<span class="pl" style="left:33px;top:350px;">Step</span>
<div class="abs" style="left:98px;top:345px;width:150px;height:26px;background:#e4e5e9;border:1px solid #d3d4d9;border-radius:4px"></div>
<svg class="abs" style="left:229px;top:355px" width="12" height="8" viewBox="0 0 12 8"><path d="M1.500 1.500L6 6l4.500-4.500" fill="none" stroke="#6a6d73" stroke-width="1.5"/></svg>
<div class="grp" style="left:20px;top:403px;width:276px;height:237px"></div>
<span class="grpl" style="left:27px;top:395px">Stress Options</span>
<div class="grp" style="left:31px;top:426px;width:252px;height:112px"></div>
<div class="radio" style="left:42.2px;top:443.5px"></div>
<span class="pl" style="left:62px;top:443px;">Local</span>
<div class="radio on" style="left:42.2px;top:477.0px"></div>
<span class="pl" style="left:62px;top:477px;">UCS</span>
<div class="abs" style="left:114px;top:469px;width:157px;height:27px;background:#fff;border:1px solid #d3d4d9;border-radius:4px"></div>
<span class="pl" style="left:119px;top:474px;color:#555a60">Current UCS</span>
<svg class="abs" style="left:252px;top:479px" width="12" height="8" viewBox="0 0 12 8"><path d="M1.500 1.500L6 6l4.500-4.500" fill="none" stroke="#6a6d73" stroke-width="1.5"/></svg>
<div class="cb" style="left:116.0px;top:509.5px"></div>
<span class="pl" style="left:134px;top:509px;">Print UCS Axis</span>
<div class="grp" style="left:31px;top:551px;width:252px;height:80px"></div>
<div class="radio" style="left:42.5px;top:569.0px"></div>
<span class="pl" style="left:62px;top:569px;">Element</span>
<div class="radio on" style="left:144.5px;top:569.0px"></div>
<span class="pl" style="left:164px;top:569px;">Avg. Nodal</span>
<div class="cb" style="left:43.5px;top:598.5px"></div>
<span class="pl" style="left:62px;top:598px;">Avg. Nodal Active Only</span>
<div class="grp" style="left:20px;top:658px;width:276px;height:234px"></div>
<span class="grpl" style="left:27px;top:650px">Components</span>
<div class="radio" style="left:31.5px;top:678.2px"></div>
<span class="pl" style="left:50.3px;top:677.7px;">Sig-xx</span>
<div class="radio" style="left:112.5px;top:678.2px"></div>
<span class="pl" style="left:131.6px;top:677.7px;">Sig-yy</span>
<div class="radio" style="left:199.9px;top:678.2px"></div>
<span class="pl" style="left:219px;top:677.7px;">Sig-zz</span>
<div class="radio" style="left:31.5px;top:710.5px"></div>
<span class="pl" style="left:50.3px;top:710px;">Sig-xy</span>
<div class="radio" style="left:112.5px;top:710.5px"></div>
<span class="pl" style="left:131.6px;top:710px;">Sig-yz</span>
<div class="radio" style="left:199.9px;top:710.5px"></div>
<span class="pl" style="left:219px;top:710px;">Sig-xz</span>
<div class="radio" style="left:31.5px;top:743.2px"></div>
<span class="pl" style="left:50.3px;top:742.7px;">Sig-p1</span>
<div class="radio" style="left:112.5px;top:743.2px"></div>
<span class="pl" style="left:131.6px;top:742.7px;">Sig-p2</span>
<div class="radio" style="left:199.9px;top:743.2px"></div>
<span class="pl" style="left:219px;top:742.7px;">Sig-p3</span>
<div class="radio" style="left:31.5px;top:775.1px"></div>
<span class="pl" style="left:50.3px;top:774.6px;">Max-Shear</span>
<div class="radio on" style="left:160.7px;top:775.1px"></div>
<span class="pl" style="left:180px;top:774.6px;">Sig-eff</span>
<div class="radio" style="left:31.5px;top:808.0px"></div>
<span class="pl" style="left:50.3px;top:807.5px;">Sig-pmax</span>
<div class="grp" style="left:20px;top:907px;width:276px;height:245px"></div>
<span class="grpl" style="left:28px;top:899px">Type of Display</span>
<div class="cb on" style="left:32.0px;top:934.0px"></div>
<svg class="abs" style="left:32.0px;top:934.0px" width="14" height="14" viewBox="0 0 14 14"><path d="M3.200 7.200l2.700 2.700 5-5.300" fill="none" stroke="#fff" stroke-width="1.800" stroke-linecap="round" stroke-linejoin="round"/></svg>
<span class="pl" style="left:50.4px;top:933px;">Contour</span>
<div class="cb" style="left:32.0px;top:967.0px"></div>
<span class="pl" style="left:50.4px;top:966px;">Values</span>
<div class="cb" style="left:32.0px;top:998.8px"></div>
<span class="pl" style="left:50.4px;top:997.8px;">Animate</span>
<div class="cb" style="left:32.0px;top:1031.8px"></div>
<span class="pl" style="left:50.4px;top:1030.8px;">Mirrored</span>
<div class="cb dis" style="left:32.0px;top:1064.0px"></div>
<span class="pl" style="left:50.4px;top:1063px;color:#9da0a6">Yield Point</span>
<div class="cb" style="left:32.0px;top:1096.9px"></div>
<span class="pl" style="left:50.4px;top:1095.9px;">Cutting Plane</span>
<div class="cb" style="left:32.0px;top:1126.5px"></div>
<span class="pl" style="left:50.4px;top:1125.5px;">IsoSurface</span>
<div class="cb" style="left:158.0px;top:934.0px"></div>
<span class="pl" style="left:176.2px;top:933px;">Deform</span>
<div class="cb on" style="left:158.0px;top:967.0px"></div>
<svg class="abs" style="left:158.0px;top:967.0px" width="14" height="14" viewBox="0 0 14 14"><path d="M3.200 7.200l2.700 2.700 5-5.300" fill="none" stroke="#fff" stroke-width="1.800" stroke-linecap="round" stroke-linejoin="round"/></svg>
<span class="pl" style="left:176.2px;top:966px;">Legend</span>
<div class="cb" style="left:158.0px;top:998.8px"></div>
<span class="pl" style="left:176.2px;top:997.8px;">Undeformed</span>
<div class="cb dis" style="left:158.0px;top:1031.8px"></div>
<span class="pl" style="left:176.2px;top:1030.8px;color:#9da0a6">Disp. Opt.</span>
<div class="dots" style="left:123px;top:929.6px;width:26px;height:24px;line-height:27px">...</div>
<div class="dots" style="left:123px;top:962.6px;width:26px;height:24px;line-height:27px">...</div>
<div class="dots" style="left:123px;top:994.4px;width:26px;height:24px;line-height:27px">...</div>
<div class="dots" style="left:123px;top:1027.4px;width:26px;height:24px;line-height:27px">...</div>
<div class="dots" style="left:258px;top:929.6px;width:26px;height:24px;line-height:27px">...</div>
<div class="dots" style="left:258px;top:962.6px;width:26px;height:24px;line-height:27px">...</div>
<div class="dots" style="left:258px;top:1027.4px;width:26px;height:24px;line-height:27px;background:#a9adb4;color:#bfc2c8">...</div>
<div class="dots" style="left:186px;top:1092.5px;width:26px;height:24px;line-height:27px">...</div>
<div class="dots" style="left:186px;top:1122.1px;width:26px;height:24px;line-height:27px">...</div>
<div class="abs" style="left:33px;top:1176px;width:250px;height:3px;background:#bdbfc4;border-radius:1.5px"></div>
<div class="abs" style="left:23px;top:1196px;width:147px;height:46px;background:#fff;border:1.5px solid #8d9096;border-radius:5px;text-align:center;line-height:43px;font-size:14px;color:#55585e">Close</div>
<div class="abs" style="left:179px;top:1196px;width:142px;height:46px;background:#22272b;border-radius:4px;text-align:center;line-height:45px;font-size:14px;color:#e4e6e9">Apply</div>
<!-- ===== viewport background ===== -->
<div class="abs" style="left:329px;top:239px;width:2151px;height:1017px;background:#f5f5f5"></div>
<svg id="truss" style="position:absolute;left:0;top:0" width="2490" height="1267" viewBox="0 0 2490 1267"><g stroke="#b4b4b4" stroke-width="1" fill="none" stroke-linecap="round">
<path d="M814.6 1042.0L940.3 1023.2M611.2 951.4L736.9 932.6M712.9 996.7L838.6 977.9M814.6 1042.0L940.3 922.2M611.2 951.4L736.9 831.6M940.3 1023.2L1066.1 1004.4M736.9 932.6L862.7 913.8M838.6 977.9L964.4 959.1M940.3 922.2L1066.1 824.9M736.9 831.6L862.7 734.3M1066.1 1004.4L1191.8 985.7M862.7 913.8L988.4 895.1M964.4 959.1L1090.1 940.4M1066.1 824.9L1191.8 750.0M862.7 734.3L988.4 659.4M1191.8 985.7L1317.6 966.9M988.4 895.1L1114.2 876.3M1090.1 940.4L1215.9 921.6M1191.8 750.0L1317.6 697.6M988.4 659.4L1114.2 607.0M1317.6 966.9L1443.3 948.1M1114.2 876.3L1239.9 857.5M1215.9 921.6L1341.6 902.8M1317.6 697.6L1443.3 667.6M1114.2 607.0L1239.9 577.0M1443.3 948.1L1569.0 929.3M1239.9 857.5L1365.6 838.7M1341.6 902.8L1467.3 884.0M1443.3 667.6L1569.0 660.0M1239.9 577.0L1365.6 569.4M1569.0 929.3L1694.8 910.5M1365.6 838.7L1491.4 819.9M1467.3 884.0L1593.1 865.2M1569.0 660.0L1694.8 674.9M1365.6 569.4L1491.4 584.3M1694.8 910.5L1820.5 891.8M1491.4 819.9L1617.1 801.2M1593.1 865.2L1718.8 846.5M1694.8 674.9L1820.5 712.2M1491.4 584.3L1617.1 621.6M1820.5 891.8L1946.3 873.0M1617.1 801.2L1742.9 782.4M1718.8 846.5L1844.6 827.7M1820.5 712.2L1946.3 772.0M1617.1 621.6L1742.9 681.4M1946.3 873.0L2072.0 854.2M1742.9 782.4L1868.6 763.6M1844.6 827.7L1970.3 808.9M1946.3 772.0L2072.0 854.2M1742.9 681.4L1868.6 763.6M814.6 1042.0L611.2 951.4M940.3 1023.2L736.9 932.6M1066.1 1004.4L862.7 913.8M1191.8 985.7L988.4 895.1M1317.6 966.9L1114.2 876.3M1443.3 948.1L1239.9 857.5M1569.0 929.3L1365.6 838.7M1694.8 910.5L1491.4 819.9M1820.5 891.8L1617.1 801.2M1946.3 873.0L1742.9 782.4M2072.0 854.2L1868.6 763.6M940.3 1023.2L940.3 922.2M736.9 932.6L736.9 831.6M1066.1 1004.4L1066.1 824.9M862.7 913.8L862.7 734.3M1191.8 985.7L1191.8 750.0M988.4 895.1L988.4 659.4M1317.6 966.9L1317.6 697.6M1114.2 876.3L1114.2 607.0M1443.3 948.1L1443.3 667.6M1239.9 857.5L1239.9 577.0M1569.0 929.3L1569.0 660.0M1365.6 838.7L1365.6 569.4M1694.8 910.5L1694.8 674.9M1491.4 819.9L1491.4 584.3M1820.5 891.8L1820.5 712.2M1617.1 801.2L1617.1 621.6M1946.3 873.0L1946.3 772.0M1742.9 782.4L1742.9 681.4M940.3 922.2L1066.1 1004.4M736.9 831.6L862.7 913.8M1066.1 824.9L1191.8 985.7M862.7 734.3L988.4 895.1M1191.8 750.0L1317.6 966.9M988.4 659.4L1114.2 876.3M1317.6 697.6L1443.3 948.1M1114.2 607.0L1239.9 857.5M1569.0 660.0L1443.3 948.1M1365.6 569.4L1239.9 857.5M1694.8 674.9L1569.0 929.3M1491.4 584.3L1365.6 838.7M1820.5 712.2L1694.8 910.5M1617.1 621.6L1491.4 819.9M1946.3 772.0L1820.5 891.8M1742.9 681.4L1617.1 801.2M814.6 1042.0L838.6 977.9M611.2 951.4L838.6 977.9M940.3 1023.2L964.4 959.1M736.9 932.6L964.4 959.1M1066.1 1004.4L1090.1 940.4M862.7 913.8L1090.1 940.4M1191.8 985.7L1215.9 921.6M988.4 895.1L1215.9 921.6M1317.6 966.9L1341.6 902.8M1114.2 876.3L1341.6 902.8M1569.0 929.3L1341.6 902.8M1365.6 838.7L1341.6 902.8M1694.8 910.5L1467.3 884.0M1491.4 819.9L1467.3 884.0M1820.5 891.8L1593.1 865.2M1617.1 801.2L1593.1 865.2M1946.3 873.0L1718.8 846.5M1742.9 782.4L1718.8 846.5M2072.0 854.2L1844.6 827.7M1868.6 763.6L1844.6 827.7M1191.8 750.0L988.4 659.4M1317.6 697.6L1114.2 607.0M1443.3 667.6L1239.9 577.0M1569.0 660.0L1365.6 569.4M1694.8 674.9L1491.4 584.3M1090.1 704.7L1215.9 652.3M1215.9 652.3L1341.6 622.3M1341.6 622.3L1467.3 614.7M1467.3 614.7L1593.1 629.6M1191.8 750.0L1215.9 652.3M988.4 659.4L1215.9 652.3M1317.6 697.6L1341.6 622.3M1114.2 607.0L1341.6 622.3M1569.0 660.0L1341.6 622.3M1365.6 569.4L1341.6 622.3M1694.8 674.9L1467.3 614.7M1491.4 584.3L1467.3 614.7"/>
</g></svg>
<!-- origin axes -->
<svg class="abs" style="left:740px;top:990px" width="220" height="70" viewBox="0 0 220 70">
<rect x="67.500" y="48.500" width="10" height="10" fill="none" stroke="#a9c2cc" stroke-width="1.2"/>
<path d="M74.600 52L37 35.300" stroke="#8ed08e" stroke-width="3.200" stroke-linecap="round"/>
<path d="M76 51.600L132.500 43.200" stroke="#f28a86" stroke-width="2.600" stroke-linecap="round"/>
<g stroke="#6fc46f" stroke-width="1.600" fill="none" stroke-linecap="round"><path d="M17 22.500l5 6.500 5-6.500M22 29v5.500"/></g>
<g stroke="#f28a86" stroke-width="1.600" fill="none" stroke-linecap="round"><path d="M144.500 34.500l9.500 12M154 34.500l-9.500 12"/></g>
</svg>
<!-- solid joint -->
<svg class="abs" style="left:1350px;top:830px" width="190" height="160" viewBox="0 0 1505 1267">
<defs>
<linearGradient id="gy" x1="0" y1="0" x2="0" y2="1"><stop offset="0" stop-color="#b9c21c"/><stop offset="1" stop-color="#d3c814"/></linearGradient>
<linearGradient id="gg" x1="0" y1="0" x2="0" y2="1"><stop offset="0" stop-color="#7fa83c"/><stop offset=".55" stop-color="#6aa24a"/><stop offset="1" stop-color="#a9bb22"/></linearGradient>
<linearGradient id="gf" x1="0" y1="0" x2="0.08" y2="1"><stop offset="0" stop-color="#9ab52c" stop-opacity=".95"/><stop offset=".35" stop-color="#b4bd20" stop-opacity=".7"/><stop offset="1" stop-color="#c4be1c" stop-opacity="0"/></linearGradient><linearGradient id="gd" x1="0" y1="0" x2="1" y2="1"><stop offset="0" stop-color="#6d9f66"/><stop offset="1" stop-color="#68a052"/></linearGradient>
</defs>
<!-- cross beam stub (left, behind) -->
<path d="M288 660L392 645L522 705L522 760L470 850L330 870L330 690z" fill="#7aa648"/>
<path d="M288 660L392 645L522 705L440 700L330 690z" fill="#a6b41e"/>
<path d="M330 690L440 700L470 850L330 870z" fill="#6fa058"/>
<!-- vertical -->
<path d="M670 195L750 180L812 210L812 520L670 520z" fill="#c2c018"/>
<path d="M670 195L750 180L750 520L670 520z" fill="#b7bd1e"/>
<path d="M715 215L735 212L735 520L715 520z" fill="#9fae28"/>
<!-- left diagonal -->
<path d="M330 300L430 230L500 262L660 600L640 700L560 730z" fill="#6c9f68"/>
<path d="M330 300L360 285L590 700L560 730z" fill="#b0b71a"/>
<path d="M330 300L430 230L500 262L400 320z" fill="#8aa83a"/>
<!-- right diagonal -->
<path d="M990 145L1152 215L960 690L860 600L850 500z" fill="#6c9f68"/>
<path d="M990 145L1020 158L880 520L850 500z" fill="#a9b41c"/>
<path d="M990 145L1152 215L1130 268L1000 200z" fill="#86a640"/>
<!-- gusset -->
<path d="M630 520L660 490L810 490L880 510L990 770L540 840L540 740L600 700z" fill="url(#gg)"/>
<!-- stiffener small -->
<path d="M480 830L540 740L565 760L545 850z" fill="#b4b81a"/>
<!-- bottom chord -->
<path d="M210 895L270 885L1215 745L1270 752L1270 985L270 1145L210 1120z" fill="#c2bc1c"/>
<path d="M210 895L1215 745L1270 752L270 890z" fill="#aab31e"/>
<path d="M210 895L270 890L270 1145L210 1120z" fill="#b4b41a"/>
<path d="M270 890L1270 752L1270 985L270 1145z" fill="#c4be1c"/>
<path d="M500 858L1020 770L1040 900L520 985z" fill="url(#gf)"/>
</svg>
<!-- ===== floating top toolbar ===== -->
<div class="abs" style="left:986px;top:249px;width:836px;height:35px;background:#424952;border-radius:5px"></div>
<div class="abs" style="left:1783px;top:249px;width:39px;height:35px;background:#1565e9;border-radius:5px"></div>
<div class="abs" style="left:1186px;top:254px;width:141px;height:25px;border:1.5px solid #9ba1a9;border-radius:5px"></div>
<div class="abs" style="left:1421px;top:254px;width:111px;height:25px;border:1.5px solid #9ba1a9;border-radius:5px"></div>
<div class="abs" style="left:1584px;top:254px;width:111px;height:25px;border:1.5px solid #9ba1a9;border-radius:5px"></div>
<span class="t" style="left:1190px;top:260px;font-size:14px;color:#fff">Base</span>
<svg class="abs" style="left:986px;top:249px" width="836" height="35" viewBox="0 0 836 35">
<g fill="none" stroke="#fff" stroke-width="2" stroke-linecap="round" stroke-linejoin="round"><path d="M326 15l5 5 5-5M530 15l5 5 5-5M694 15l5 5 5-5"/></g>
<!-- undo / redo -->
<g fill="none" stroke="#dcdee1" stroke-width="1.500" stroke-linejoin="round"><path d="M14 17l7-5.500v3.500c5 0 8.500 2 9.500 7.500-2.500-3-5-3.700-9.500-3.500V22.500z"/></g>
<path d="M41.500 16h7l-3.500 4z" fill="#dcdee1"/>
<g fill="none" stroke="#7d848d" stroke-width="1.500" stroke-linejoin="round"><path d="M86 17l-7-5.500v3.500c-5 0-8.500 2-9.500 7.500 2.500-3 5-3.700 9.500-3.500V22.500z"/></g>
<path d="M98.500 16h7l-3.500 4z" fill="#7d848d"/>
<!-- page icon 1118-986=132 -->
<g fill="none" stroke="#dcdee1" stroke-width="1.500" stroke-linejoin="round"><path d="M126 10h8l3 3v13h-11z"/></g><circle cx="137.500" cy="19.500" r="4" fill="#424952" stroke="#8fb0e8" stroke-width="1.400"/>
<!-- glasses icon 172.6 -->
<g fill="none" stroke="#dcdee1" stroke-width="1.500"><path d="M164 15h17M166.500 15v10M171 17l7 8M178 17l-7 8M164 15l2.500 3.500 2.500-3.500"/></g><path d="M174 10h7M177.500 7v6" stroke="#8fb0e8" stroke-width="1.300"/>
<!-- icon 367.7 -->
<g fill="none" stroke="#dcdee1" stroke-width="1.500"><rect x="360" y="9.500" width="15" height="4" rx="1"/><rect x="360" y="21.500" width="15" height="4" rx="1"/><path d="M363 13.500l9 8M372 13.500l-9 8"/></g>
<!-- icon 407.8 -->
<g fill="none" stroke="#8fb0e8" stroke-width="1.300"><circle cx="402.500" cy="12.500" r="3.300"/></g><path d="M405 15l9 3.600-3.400 1.600 3.200 3.600-1.500 1.200-3.100-3.700-1.800 3.200z" fill="#424952" stroke="#dcdee1" stroke-width="1.300" stroke-linejoin="round"/>
<!-- icon 572.6 -->
<g fill="none" stroke="#8fb0e8" stroke-width="1.300"><circle cx="566.500" cy="12" r="3.300"/><path d="M570 12h10"/></g><path d="M570 15l9 3.600-3.400 1.600 3.200 3.600-1.500 1.200-3.100-3.700-1.800 3.200z" fill="#424952" stroke="#dcdee1" stroke-width="1.300" stroke-linejoin="round"/>
<!-- disabled 736 -->
<g fill="none" stroke="#6d747d" stroke-width="1.400"><circle cx="738" cy="16" r="6"/><path d="M733.500 20.500l-4 4M735 17l2-2 2 2 2-2"/></g>
<!-- lock 775.3 -->
<g fill="none" stroke="#dcdee1" stroke-width="1.500" stroke-linejoin="round"><rect x="769" y="16.500" width="13" height="9.500" rx="1.500"/><path d="M772 16.500v-3a3.500 3.500 0 0 1 7-1"/><path d="M775.500 19v4M773.800 21.500l1.700 1.700 1.700-1.700" stroke-width="1.200"/></g>
<g fill="none" stroke="#e8eefc" stroke-width="1.500" stroke-linejoin="round"><rect x="809" y="16.500" width="13" height="9.500" rx="1.500"/><path d="M812 16.500v-3a3.500 3.500 0 0 1 7 0v3"/><path d="M815.500 19v4M813.800 21.500l1.700 1.700 1.700-1.700" stroke-width="1.200"/></g>
</svg>
<!-- ===== triad (top right) ===== -->
<svg class="abs" style="left:2150px;top:255px" width="130" height="100" viewBox="0 0 130 100">
<g stroke="#c4c6c9" stroke-width="1.400" fill="none"><path d="M56 80V35M56 80l39-5M56 80L34 71"/></g>
<g font-family="Liberation Sans, sans-serif" font-size="23" fill="#7b7e84"><text x="47" y="28">Z</text><text x="14" y="76">Y</text><text x="102" y="82">X</text></g>
</svg>
<!-- cube button -->
<div class="abs" style="left:2250px;top:445px;width:39px;height:39px;border-radius:50%;background:#ebebee;border:1px solid #e2e3e6"></div>
<svg class="abs" style="left:2258px;top:453px" width="24" height="24" viewBox="0 0 24 24"><g fill="none" stroke="#6d7076" stroke-width="1.600" stroke-linejoin="round"><path d="M12 3l8 4.200v9.600L12 21l-8-4.200V7.200z"/><path d="M4 7.200l8 4.300 8-4.300M12 11.500V21"/></g></svg>
<!-- ===== vertical toolbar ===== -->
<div class="abs" style="left:2285px;top:496px;width:39px;height:504px;background:#424952;border-radius:5px"></div>
<svg class="abs" style="left:2285px;top:496px" width="39" height="504" viewBox="0 0 39 504">
<defs>
<g id="mag" fill="none" stroke="#dcdee1" stroke-width="1.500" stroke-linecap="round"><circle cx="-1.500" cy="-1.500" r="5.300"/><path d="M2.600 2.600l4.900 4.900"/></g>
<g id="box" fill="none" stroke="#dcdee1" stroke-width="1.400" stroke-linejoin="round"><path d="M-7 -3h10v10h-10zM-7 -3l4-4h10v10l-4 4M3 -3l4-4"/></g>
</defs>
<use href="#mag" x="19" y="18"/><path d="M14.500 16.500h6M14.500 16.500l1.500-1.500M14.500 16.500l1.500 1.500M20.500 16.500l-1.500-1.500M20.500 16.500l-1.500 1.500" stroke="#8fb0e8" stroke-width="1.200" fill="none"/>
<use href="#mag" x="19" y="54"/><rect x="14.800" y="49.800" width="5.400" height="5.400" fill="none" stroke="#8fb0e8" stroke-width="1.200"/>
<use href="#mag" x="19" y="90"/><path d="M15 88.500h5M17.500 86v5" stroke="#dcdee1" stroke-width="1.300"/>
<use href="#mag" x="19" y="126"/><path d="M15 124.500h5" stroke="#dcdee1" stroke-width="1.300"/>
<use href="#mag" x="19" y="162"/><path d="M14 157l7 7M21 157l-7 7" stroke="#8fb0e8" stroke-width="1.200"/><circle cx="13.500" cy="156.500" r="1.200" fill="#8fb0e8"/><circle cx="21.500" cy="156.500" r="1.200" fill="#8fb0e8"/>
<use href="#mag" x="19" y="198"/><path d="M15 199l5-5M20 197v-3h-3" stroke="#8fb0e8" stroke-width="1.200" fill="none"/>
<!-- hand -->
<g fill="none" stroke="#dcdee1" stroke-width="1.400" stroke-linejoin="round" stroke-linecap="round"><path d="M15 236v-6.500a1.200 1.200 0 0 1 2.400 0v-1.700a1.200 1.200 0 0 1 2.400 0v1.500a1.200 1.200 0 0 1 2.400 0v2a1.200 1.200 0 0 1 2.400 0v6c0 3.500-2 5.500-5 5.500-2.500 0-3.800-1-5-3l-2.300-4c-.6-1.200.8-2.200 1.800-1.100z"/></g>
<!-- orbit -->
<g fill="none" stroke="#dcdee1" stroke-width="1.400"><ellipse cx="19.500" cy="271" rx="8" ry="3.600"/><path d="M19.500 262v18"/><circle cx="19.500" cy="271" r="2" stroke="#8fb0e8"/><path d="M17.500 264l2-2.500 2 2.500M17.500 278l2 2.500 2-2.500" stroke-width="1.200"/></g>
<!-- rotate -->
<g fill="none" stroke="#dcdee1" stroke-width="1.400" stroke-linecap="round"><path d="M12.500 311a7.500 7.500 0 0 1 3-9M26.500 303a7.500 7.500 0 0 1-3 9M15 299.500l1 3-3 .8M24 314.500l-1-3 3-.8"/><path d="M16.500 310l6-6" stroke="#8fb0e8"/><path d="M20 304h2.500v2.500" stroke="#8fb0e8"/></g>
<g fill="none" stroke="#dcdee1" stroke-width="1.400" stroke-linecap="round"><path d="M12 345a7.500 7.500 0 0 1 3.500-8M27 339a7.500 7.500 0 0 1-3.500 8M14 335l1.500 2.500-3 1M25 349l-1.500-2.500 3-1"/><rect x="16.500" y="340" width="6" height="4.500" stroke="#8fb0e8" stroke-width="1.200"/><path d="M13 333.500h13" stroke-width="1.200"/></g>
<use href="#box" x="19" y="378"/><use href="#box" x="19" y="414"/><path d="M14.500 414.500h5v5h-5z" fill="none" stroke="#8fb0e8" stroke-width="1.100"/>
<use href="#box" x="19" y="450"/><path d="M14.500 448h5M14.500 451h5" stroke="#8fb0e8" stroke-width="1.100"/>
<use href="#box" x="19" y="486"/><path d="M14.500 484.500l5 5M19.500 484.500l-5 5" stroke="#8fb0e8" stroke-width="1.100"/>
</svg>
<!-- ===== bottom message bar ===== -->
<div class="abs" style="left:902px;top:1203px;width:1004px;height:41px;background:#2a2b2f;border-radius:4px;border:1px solid #17181a"></div>
<div class="abs" style="left:903px;top:1205px;width:13px;height:38px;background:#cfcfd1;border-radius:3px 0 0 3px"></div>
<div class="abs" style="left:908px;top:1214px;width:2px;height:19px;background:#2a2b2f"></div>
<div class="abs" style="left:924px;top:1210px;width:93px;height:28px;border:1.500px solid #6a3fd0;border-radius:3px;background:#1f2023"></div>
<span class="t" style="left:934px;top:1218px;font-size:13px;color:#dedfe2">Analysis</span>
<div class="abs" style="left:1004px;top:1218px;width:2px;height:2px;background:#777"></div><div class="abs" style="left:1003.500px;top:1227px;width:3px;height:3px;background:#7a4fe0;border-radius:50%"></div>
<svg class="abs" style="left:1880px;top:1219px" width="14" height="10" viewBox="0 0 14 10"><path d="M1.500 8.500L7 2l5.500 6.500z" fill="#fff"/></svg>
<div class="abs" style="left:1899px;top:1205px;width:6px;height:38px;background:#1b1c1f;border-radius:0 3px 3px 0"></div>
<!-- ===== legend ===== -->
<div class="abs" style="left:2335px;top:240px;width:1.300px;height:1016px;background:#3c3c3c"></div>
<span class="mono" style="left:2406.5px;top:242.0px;color:#3a3a3a;transform:translateX(-50%)">MIDAS CIVIL NX</span>
<span class="mono" style="left:2406.5px;top:258.0px;color:#3a3a3a;transform:translateX(-50%)">POST-PROCESSOR</span>
<div class="abs" style="left:2342px;top:270px;width:130px;height:2px;background:#7c7c7c"></div>
<span class="mono" style="left:2406.5px;top:278.0px;color:#3a3a3a;transform:translateX(-50%)">SOLID STRESS</span>
<div class="abs" style="left:2342px;top:291px;width:130px;height:2px;background:#7c7c7c"></div>
<span class="mono" style="left:2406.5px;top:302.0px;color:#3a3a3a;transform:translateX(-50%)">SIG-EFF</span>
<svg class="abs" style="left:2340px;top:325px" width="40" height="250" viewBox="0 0 40 250">
<rect x="2.600" y="4.90" width="28.300" height="21.95" fill="#f5524a"/>
<rect x="2.600" y="26.55" width="28.300" height="21.95" fill="#f98c2a"/>
<rect x="2.600" y="48.20" width="28.300" height="21.95" fill="#ffaa18"/>
<rect x="2.600" y="69.85" width="28.300" height="21.95" fill="#ffc800"/>
<rect x="2.600" y="91.50" width="28.300" height="21.95" fill="#ffda00"/>
<rect x="2.600" y="113.15" width="28.300" height="21.95" fill="#ffec00"/>
<rect x="2.600" y="134.80" width="28.300" height="21.95" fill="#c6d916"/>
<rect x="2.600" y="156.45" width="28.300" height="21.95" fill="#98d020"/>
<rect x="2.600" y="178.10" width="28.300" height="21.95" fill="#5acb66"/>
<rect x="2.600" y="199.75" width="28.300" height="21.95" fill="#30c2a2"/>
<rect x="2.600" y="221.40" width="28.300" height="21.95" fill="#40a8e2"/>
<rect x="2.600" y="4.90" width="28.300" height="238.15" fill="none" stroke="#2a2a2a" stroke-width="1"/>
<path d="M2.600 4.90H34M2.600 26.55H34M2.600 48.20H34M2.600 69.85H34M2.600 91.50H34M2.600 113.15H34M2.600 134.80H34M2.600 156.45H34M2.600 178.10H34M2.600 199.75H34M2.600 221.40H34M2.600 243.05H34" stroke="#2a2a2a" stroke-width="1" fill="none"/>
</svg>
<span class="mono" style="left:2386.0px;top:325.0px;color:#3a3a3a">2.74874e+01</span>
<span class="mono" style="left:2386.0px;top:347.0px;color:#3a3a3a">2.49960e+01</span>
<span class="mono" style="left:2386.0px;top:368.0px;color:#3a3a3a">2.25046e+01</span>
<span class="mono" style="left:2386.0px;top:390.0px;color:#3a3a3a">2.00132e+01</span>
<span class="mono" style="left:2386.0px;top:412.0px;color:#3a3a3a">1.75218e+01</span>
<span class="mono" style="left:2386.0px;top:433.0px;color:#3a3a3a">1.50304e+01</span>
<span class="mono" style="left:2386.0px;top:455.0px;color:#3a3a3a">1.25390e+01</span>
<span class="mono" style="left:2386.0px;top:476.0px;color:#3a3a3a">1.00476e+01</span>
<span class="mono" style="left:2386.0px;top:498.0px;color:#3a3a3a">7.55615e+00</span>
<span class="mono" style="left:2386.0px;top:520.0px;color:#3a3a3a">5.06474e+00</span>
<span class="mono" style="left:2386.0px;top:541.0px;color:#3a3a3a">2.57333e+00</span>
<span class="mono" style="left:2386.0px;top:563.0px;color:#3a3a3a">8.19162e-02</span>
<span class="mono" style="left:2342.0px;top:1035.0px;color:#3a3a3a">ST: DEAD LOAD</span>
<span class="mono" style="left:2342.0px;top:1051.0px;color:#3a3a3a">AVG NODAL</span>
<div class="abs" style="left:2342px;top:1072px;width:130px;height:2px;background:#7c7c7c"></div>
<span class="mono" style="left:2342.0px;top:1076.0px;color:#3a3a3a">MAX : 7101</span>
<span class="mono" style="left:2342.0px;top:1092.0px;color:#3a3a3a">MIN : 5477</span>
<div class="abs" style="left:2342px;top:1107px;width:130px;height:2px;background:#7c7c7c"></div>
<span class="mono" style="left:2342.0px;top:1112.0px;color:#3a3a3a">FILE: ARCH_NE~</span>
<span class="mono" style="left:2342.0px;top:1130.0px;color:#3a3a3a">UNIT: N/mm&#178;</span>
<span class="mono" style="left:2342.0px;top:1147.0px;color:#3a3a3a">DATE: 07/09/2025</span>
<div class="abs" style="left:2342px;top:1160px;width:130px;height:2px;background:#7c7c7c"></div>
<span class="mono" style="left:2407.0px;top:1167.0px;color:#3a3a3a;transform:translateX(-50%)">VIEW-DIRECTION</span>
<span class="mono" style="left:2342.0px;top:1184.0px;color:#f2a2aa">X:-0.483</span>
<span class="mono" style="left:2342.0px;top:1210.0px;color:#a2e6a6">Y:-0.837</span>
<span class="mono" style="left:2342.0px;top:1236.0px;color:#a4a4f0">Z: 0.259</span>
<svg class="abs" style="left:2415px;top:1180px" width="65" height="55" viewBox="0 0 65 55">
<path d="M26.200 36V13" stroke="#1010f0" stroke-width="3.200"/><path d="M28.200 5.500l3.600 10h-7.200z" fill="#1010f0"/>
<path d="M30 37.500l14-2.500" stroke="#f01010" stroke-width="3.400"/><path d="M41 30l14.500 3.500-12.500 6z" fill="#e81010"/>
<path d="M11.500 31l9-3 5 8-7 2.500z" fill="#10a838"/><path d="M11.500 31l9-3 1.500 3-8 3z" fill="#20c850"/>
<circle cx="28.200" cy="38.500" r="5.600" fill="#ee86ee"/>
</svg>
<!-- ===== stresses dropdown ===== -->
<div class="abs" style="left:694px;top:133px;width:293px;height:305px;background:#22272b;border:1px solid #3b4047;border-radius:5px;box-shadow:2px 3px 5px rgba(0,0,0,.35)"></div>
<div class="abs" style="left:696px;top:405px;width:289px;height:31px;background:#1565e9;border-radius:4px"></div>
<span class="mi" style="top:144px">Truss Stresses</span>
<span class="mi" style="top:174px">Beam Stresses</span>
<span class="mi" style="top:204px">Beam Stresses Diagram</span>
<span class="mi" style="top:234px">Beam Stresses(Equivalent)</span>
<span class="mi" style="top:264px">Beam Stresses Diagram(Equivalent)</span>
<span class="mi" style="top:294px;color:#6d747d">Beam Stresses (PSC)</span>
<span class="mi" style="top:324px">Plane-Stress/Plate Stresses</span>
<span class="mi" style="top:354px">Plane Strain Stresses</span>
<span class="mi" style="top:384px">Axisymmetric Stresses</span>
<span class="mi" style="top:414px;color:#fff">Solid Stresses</span>
<svg class="abs" style="left:700px;top:140px" width="24" height="296" viewBox="0 0 24 296">
<defs><linearGradient id="rb" x1="0" y1="0" x2="1" y2="0"><stop offset="0" stop-color="#f0503c"/><stop offset=".3" stop-color="#f6a020"/><stop offset=".5" stop-color="#f6e020"/><stop offset=".72" stop-color="#48c050"/><stop offset="1" stop-color="#3878e8"/></linearGradient></defs>
<!-- truss -->
<g fill="none" stroke="#d6d8db" stroke-width="1.300" stroke-linejoin="round"><path d="M3 18h16L14.500 10h-7zM7.500 10l3.500 8 3.500-8"/></g><circle cx="4.500" cy="6" r="1.600" fill="none" stroke="#8fb0e8" stroke-width="1"/>
<!-- beam stresses -->
<path d="M3 40l12-6v9L3 49z" fill="url(#rb)"/><path d="M13 50h5M15.500 45v5" stroke="#d6d8db" stroke-width="1.200"/><circle cx="4.500" cy="36" r="1.500" fill="none" stroke="#8fb0e8" stroke-width="1"/>
<!-- diagram -->
<g fill="none" stroke="#d6d8db" stroke-width="1.300"><path d="M3 72c2 8 12 8 15 0M3 72h15"/></g><circle cx="4.500" cy="66" r="1.500" fill="none" stroke="#8fb0e8" stroke-width="1"/>
<path d="M3 100l12-6v9L3 109z" fill="url(#rb)"/><path d="M13 110h5M15.500 105v5" stroke="#d6d8db" stroke-width="1.200"/><circle cx="4.500" cy="96" r="1.500" fill="none" stroke="#8fb0e8" stroke-width="1"/>
<g fill="none" stroke="#d6d8db" stroke-width="1.300"><path d="M3 132c2 8 12 8 15 0M3 132h15"/></g><circle cx="4.500" cy="126" r="1.500" fill="none" stroke="#8fb0e8" stroke-width="1"/>
<!-- psc disabled -->
<g fill="none" stroke="#5d646d" stroke-width="1.300"><path d="M4 157h12l-9 10h11M3 162c4-3 6 3 10 0M3 167c3-2 5 2 8 0"/></g>
<!-- plate -->
<path d="M4 189l13-3v13l-13 4z" fill="url(#rb)"/><circle cx="4.500" cy="185" r="1.500" fill="none" stroke="#8fb0e8" stroke-width="1"/>
<!-- plane strain -->
<path d="M5 229l3-12h5l4 12z" fill="url(#rb)"/><path d="M4 215v15h14" stroke="#d6d8db" stroke-width="1.300" fill="none"/><circle cx="18" cy="231" r="1" fill="#d6d8db"/>
<!-- axisym -->
<g fill="none" stroke="#d6d8db" stroke-width="1.300"><ellipse cx="10.500" cy="246.500" rx="7" ry="2.500"/><path d="M3.500 246.500v11c0 3.500 14 3.500 14 0v-11"/></g><rect x="10.500" y="249" width="7" height="9" fill="url(#rb)"/>
<!-- solid -->
<path d="M5 275l8-3 6 3.500v8l-7 4-7-4z" fill="#f6a020"/><path d="M5 275l7 3.500 7-3M12 278.500v9" fill="none" stroke="#f0503c" stroke-width="1.200"/><path d="M5 275l8-3 6 3.500-7 3z" fill="#f6d820"/><circle cx="4" cy="272" r="1.400" fill="none" stroke="#8fb0e8" stroke-width="1"/>
</svg>
<!-- tooltip -->
<div class="abs" style="left:831px;top:447px;width:159px;height:24px;background:#fff;border:1px solid #c6c6c6;box-shadow:1px 2px 2px rgba(0,0,0,.25)"></div>
<span class="t" style="left:836px;top:451px;font-size:15px;color:#7a7a7a">Solid Stresses</span>
<!-- ===== red dashed highlights ===== -->
<svg class="abs" style="left:0;top:0;z-index:40;filter:drop-shadow(2px 4px 2.5px rgba(0,0,0,.45))" width="2490" height="1267" viewBox="0 0 2490 1267">
<g fill="none" stroke="#f04040" stroke-width="3.400" stroke-dasharray="9.500 5">
<rect x="116.500" y="45.500" width="108" height="92"/>
<rect x="692" y="45.500" width="60.500" height="91.500"/>
<rect x="799.500" y="12.500" width="82" height="31.500"/>
<rect x="692.500" y="401" width="298" height="45.500"/>
<rect x="18.500" y="302" width="282.500" height="44"/>
<rect x="178" y="1190" width="144" height="51.500"/>
</g></svg>
<!-- ===== callouts ===== -->
<div class="callout" style="left:964.7px;top:340.2px">1</div>
<div class="callout" style="left:266px;top:243px">2</div>
<div class="callout" style="left:304.7px;top:1130px">3</div>
</div>
<div id="frame"></div>
</body></html>
